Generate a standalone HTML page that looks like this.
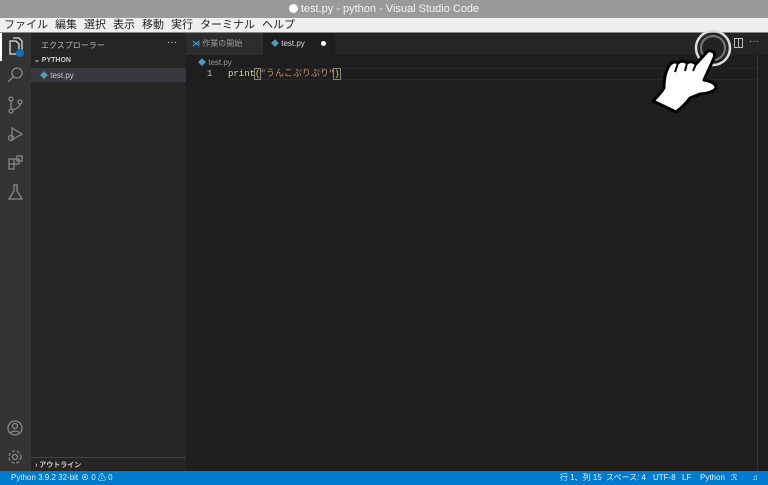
<!DOCTYPE html>
<html><head><meta charset="utf-8"><style>
*{margin:0;padding:0;box-sizing:border-box}
body{width:768px;height:485px;overflow:hidden;font-family:"Liberation Sans","Noto Sans CJK JP",sans-serif;background:#1e1e1e;position:relative}
.abs{position:absolute}
#title{left:0;top:0;width:768px;height:18px;background:#9a9a9a;color:#f4f4f4;font-size:11px;text-align:center;line-height:18px}
#menu{left:0;top:18px;width:768px;height:15px;background:#efefef;color:#222;font-size:11px;line-height:15px;padding-left:4px;border-bottom:1px solid #888}
#menu span{margin-right:7px}
#act{left:0;top:33px;width:31px;height:438px;background:#333}
#side{left:31px;top:33px;width:155px;height:438px;background:#252526;color:#ccc}
#tabs{left:186px;top:33px;width:582px;height:22px;background:#252526}
#status{left:0;top:471px;width:768px;height:14px;background:#007acc;color:#e8f2fa;font-size:8px;line-height:14px}
svg{position:absolute}
</style></head><body>
<div id="title" class="abs"><span style="display:inline-block;width:9px;height:9px;border-radius:50%;background:#fff;vertical-align:-1px;margin-right:3px"></span>test.py - python - Visual Studio Code</div>
<div id="menu" class="abs"><span>ファイル</span><span>編集</span><span>選択</span><span>表示</span><span>移動</span><span>実行</span><span>ターミナル</span><span>ヘルプ</span></div>
<div id="act" class="abs">
<div class="abs" style="left:0;top:0;width:2px;height:28px;background:#fff"></div>
<svg width="31" height="438" fill="none" stroke="#888" stroke-width="1.3">
<path d="M10 8h6l3 3v10h-9zM13 5h6l3 3v10" stroke="#ddd"/>
<circle cx="20" cy="20" r="4" fill="#0e70c0" stroke="none"/>
<circle cx="17" cy="40" r="5"/><path d="M13 44l-5 5"/>
<circle cx="11" cy="66" r="2"/><circle cx="11" cy="78" r="2"/><circle cx="20" cy="69" r="2"/><path d="M11 68v8M20 71q0 4-8 6"/>
<path d="M12 95l10 6-10 6z"/><circle cx="11" cy="105" r="2.5"/>
<path d="M9 126h5v5h-5zM14 126h5v5h-5zM9 131h5v5h-5zM17 123h5v5h-5z"/>
<path d="M13 152h5M14 152v6l-5 8h13l-5-8v-6"/>
<circle cx="15" cy="395" r="7"/><circle cx="15" cy="393" r="2.5"/><path d="M10 400q5-4 10 0"/>
<circle cx="15" cy="424" r="6" stroke-dasharray="3 2"/><circle cx="15" cy="424" r="2.5"/>
</svg></div>
<div id="side" class="abs">
<div class="abs" style="left:10px;top:7px;font-size:8px;color:#bbb">エクスプローラー</div>
<div class="abs" style="left:136px;top:4px;font-size:10px">···</div>
<div class="abs" style="left:3px;top:23px;font-size:7px;font-weight:bold">⌄ PYTHON</div>
<div class="abs" style="left:0;top:35px;width:155px;height:14px;background:#37373d"></div>
<div class="abs" style="left:9px;top:37px;font-size:8px;color:#ccc"><span style="color:#519aba">◆</span> test.py</div>
<div class="abs" style="left:0;top:424px;width:155px;height:1px;background:#444"></div>
<div class="abs" style="left:4px;top:427px;font-size:7px;font-weight:bold">› アウトライン</div>
</div>
<div id="tabs" class="abs">
<div class="abs" style="left:0;top:0;width:77px;height:22px;background:#2d2d2d;color:#999;font-size:8px;line-height:22px;padding-left:6px"><span style="color:#3a9be0;font-weight:bold">⋊</span> 作業の開始</div>
<div class="abs" style="left:77px;top:0;width:72px;height:22px;background:#1e1e1e;color:#ddd;font-size:8px;line-height:22px;padding-left:8px"><span style="color:#519aba">◆</span> test.py<span style="position:absolute;left:58px;top:8px;width:5px;height:5px;border-radius:50%;background:#fff"></span></div>
<div class="abs" style="left:548px;top:5px;width:9px;height:10px;border:1px solid #bbb"></div>
<div class="abs" style="left:552px;top:5px;width:1px;height:10px;background:#bbb"></div>
<div class="abs" style="left:563px;top:3px;color:#bbb;font-size:10px">···</div>
</div>
<div class="abs" style="left:198px;top:57px;font-size:8px;color:#999"><span style="color:#519aba">◆</span> test.py</div>
<div class="abs" style="left:228px;top:68px;width:530px;height:12px;border-top:1px solid #282828;border-bottom:1px solid #282828"></div>
<div class="abs" style="left:207px;top:68px;font-family:'Liberation Mono','Noto Sans CJK JP',monospace;font-size:9px;color:#c6c6c6;line-height:12px">1</div>
<div class="abs" style="left:228px;top:68px;font-family:'Liberation Mono','Noto Sans CJK JP',monospace;font-size:9px;line-height:12px;color:#dcdcaa">print<span style="color:#ffd700;outline:1px solid #888">(</span><span style="color:#ce9178">"うんこぷりぷり"</span><span style="color:#ffd700;outline:1px solid #888">)</span></div>
<div class="abs" style="left:757px;top:55px;width:1px;height:416px;background:#333"></div>
<svg width="768" height="485" style="left:0;top:0">
<circle cx="713" cy="48" r="17" fill="none" stroke="#ddd" stroke-width="2.5"/>
<circle cx="713" cy="48" r="12" fill="none" stroke="#777" stroke-width="2"/>
<circle cx="713" cy="48" r="9" fill="#222"/>
<path d="M711 51 Q716 52 714 58 L704 80 Q716 82 716 88 Q713 93 700 94 L690 98 Q684 106 676 112 L653 101 Q661 93 664 88 Q664 74 669 66 Q673 60 678 63 Q682 59 687 63 Q691 60 696 64 L706 53 Q708 50 711 51 Z" fill="#fff" stroke="#000" stroke-width="3" stroke-linejoin="round"/>
<path d="M678 63l-3 9M687 63l-2 8M696 64l-3 7" stroke="#000" stroke-width="2" fill="none"/>
</svg>
<div id="status" class="abs">
<span class="abs" style="left:11px">Python 3.9.2 32-bit</span>
<span class="abs" style="left:81px">⊗ 0 ⚠ 0</span>
<span class="abs" style="left:560px">行 1、列 15</span>
<span class="abs" style="left:606px">スペース: 4</span>
<span class="abs" style="left:653px">UTF-8</span>
<span class="abs" style="left:682px">LF</span>
<span class="abs" style="left:700px">Python</span>
<span class="abs" style="left:731px">ℛ</span>
<span class="abs" style="left:752px">♫</span>
</div>
</body></html>
